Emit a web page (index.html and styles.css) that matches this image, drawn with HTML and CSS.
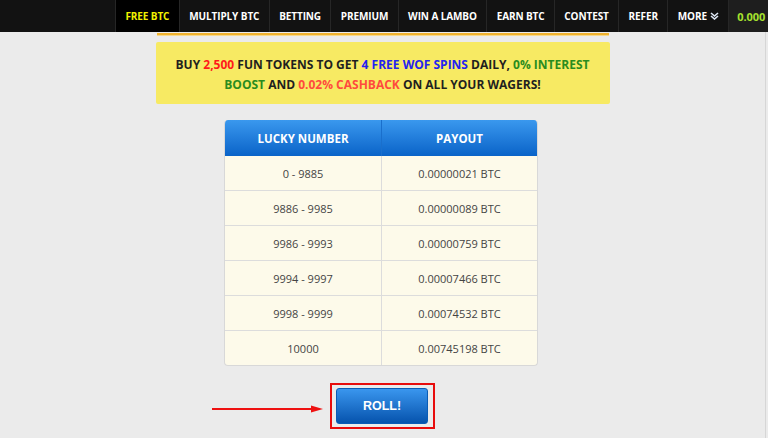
FILE: index.html
```html
<!DOCTYPE html>
<html>
<head>
<meta charset="utf-8">
<link rel="stylesheet" href="styles.css">
</head>
<body>
<div class="page">
  <nav class="nav">
    <a class="nav-item active">FREE BTC</a>
    <a class="nav-item">MULTIPLY BTC</a>
    <a class="nav-item">BETTING</a>
    <a class="nav-item">PREMIUM</a>
    <a class="nav-item">WIN A LAMBO</a>
    <a class="nav-item">EARN BTC</a>
    <a class="nav-item">CONTEST</a>
    <a class="nav-item">REFER</a>
    <a class="nav-item">MORE <svg class="chev" width="9" height="8" viewBox="0 0 9 8"><path d="M1 1 L4.5 4 L8 1 M1 4 L4.5 7 L8 4" fill="none" stroke="#dfe8f5" stroke-width="1.6"/></svg></a>
    <a class="nav-item balance">0.000</a>
  </nav>
  <main class="content">
    <div class="orange-line"></div>
    <div class="promo">
      <p class="promo-text">BUY <span class="red">2,500</span> FUN TOKENS TO GET <span class="blue">4 FREE WOF SPINS</span> DAILY, <span class="green">0% INTEREST</span> <span class="green">BOOST</span> AND <span class="coral">0.02% CASHBACK</span> ON ALL YOUR WAGERS!</p>
    </div>
    <div class="table">
      <div class="thead">
        <div class="th">LUCKY NUMBER</div>
        <div class="th">PAYOUT</div>
      </div>
      <div class="tr"><div class="td">0 - 9885</div><div class="td">0.00000021 BTC</div></div>
      <div class="tr"><div class="td">9886 - 9985</div><div class="td">0.00000089 BTC</div></div>
      <div class="tr"><div class="td">9986 - 9993</div><div class="td">0.00000759 BTC</div></div>
      <div class="tr"><div class="td">9994 - 9997</div><div class="td">0.00007466 BTC</div></div>
      <div class="tr"><div class="td">9998 - 9999</div><div class="td">0.00074532 BTC</div></div>
      <div class="tr"><div class="td">10000</div><div class="td">0.00745198 BTC</div></div>
    </div>
    <div class="roll-row">
      <svg class="arrow" width="112" height="10" viewBox="0 0 112 10"><path d="M0 5 H102" stroke="#ee1111" stroke-width="2"/><path d="M99 1.5 L111 5 L99 8.5 Z" fill="#ee1111"/></svg>
      <div class="highlight">
        <button class="roll">ROLL!</button>
      </div>
    </div>
  </main>
</div>
</body>
</html>
```
FILE: styles.css
```css
html, body {
  margin: 0;
  padding: 0;
}
body {
  background: #ebebeb;
  font-family: "Open Sans", "Liberation Sans", sans-serif;
  overflow: hidden;
}
.page {
  width: 765px;
  height: 438px;
  border-right: 1px solid #d6d6d6;
  background: #ebebeb;
}
.nav {
  display: flex;
  height: 32px;
  background: #121212;
  padding-left: 115px;
  white-space: nowrap;
  overflow: hidden;
  width: 653px;
}
.nav-item {
  display: flex;
  align-items: center;
  gap: 3px;
  padding: 0 9.4px;
  color: #fff;
  font-size: 10px;
  font-weight: 700;
  border-left: 1px solid #262626;
  letter-spacing: -0.1px;
}
.nav-item.active {
  background: #000;
  color: #f2f200;
}
.nav-item.balance {
  background: #1e1e1e;
  color: #a6e22e;
  font-size: 11px;
  padding: 0 0 0 8px;
  flex: 1;
}
.chev {
  display: block;
}
.content {
  display: flex;
  flex-direction: column;
  align-items: center;
  width: 765px;
}
.orange-line {
  width: 452px;
  height: 2px;
  margin-top: 1px;
  background: #f0b22e;
  box-shadow: 0 1px 0 #f7d88a;
}
.promo {
  box-sizing: border-box;
  width: 454px;
  height: 62px;
  margin-top: 7px;
  background: #f7ea63;
  border-radius: 2px;
  padding: 13px 14px 0;
  text-align: center;
}
.promo-text {
  margin: 0;
  font-size: 12px;
  font-weight: 700;
  line-height: 20px;
  color: #1f1f1f;
}
.red { color: #ff1a1a; }
.blue { color: #2323f0; }
.green { color: #2a8c1e; }
.coral { color: #ff4a3d; }
.table {
  width: 314px;
  margin-top: 16px;
  margin-left: -3px;
  border-radius: 4px;
  overflow: hidden;
  background: #fdfaea;
  border: 1px solid #d8d8d8;
  border-top: none;
  box-sizing: border-box;
}
.thead {
  display: grid;
  grid-template-columns: 1fr 1fr;
  height: 36px;
  background: linear-gradient(#3a98ee, #0a63c8);
}
.th {
  display: flex;
  align-items: center;
  justify-content: center;
  color: #fff;
  font-size: 11.5px;
  font-weight: 700;
}
.th + .th {
  border-left: 1px solid #1a6fcc;
}
.tr {
  display: grid;
  grid-template-columns: 1fr 1fr;
  height: 34px;
  border-top: 1px solid #dcdcdc;
}
.thead + .tr { border-top: none; height: 34px; }
.td {
  display: flex;
  align-items: center;
  justify-content: center;
  font-size: 11px;
  color: #444;
}
.td + .td {
  border-left: 1px solid #dcdcdc;
}
.roll-row {
  display: flex;
  align-items: center;
  margin-top: 17px;
  margin-left: -118px;
}
.arrow {
  display: block;
  margin-right: 6px;
  margin-top: 6px;
}
.highlight {
  border: 2px solid #e80c0c;
  padding: 3px 5px 3px 4px;
}
.roll {
  display: block;
  width: 92px;
  height: 36px;
  border: 1px solid #0a5cb5;
  border-radius: 3px;
  background: linear-gradient(#3a96ee, #0653ad);
  color: #fff;
  font-family: "Liberation Sans", Arial, sans-serif;
  font-weight: 700;
  font-size: 12.5px;
  padding: 0;
}
```
